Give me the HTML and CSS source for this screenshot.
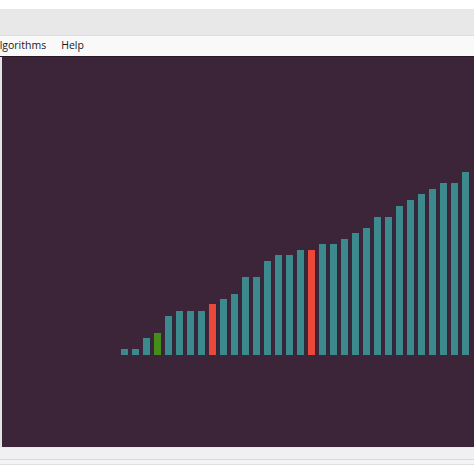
FILE: index.html
```html
<!DOCTYPE html>
<html>
<head>
<meta charset="utf-8">
<link rel="stylesheet" href="styles.css">
</head>
<body>
<div class="window">
  <div class="titlebar"></div>
  <div class="toolbar"></div>
  <div class="menubar">
    <span class="menu-item first">Algorithms</span>
    <span class="menu-item">Help</span>
  </div>
  <div class="main">
    <div class="strip"></div>
    <div class="canvas">
      <div class="bar" style="height:6px"></div>
      <div class="bar" style="height:6px"></div>
      <div class="bar" style="height:17px"></div>
      <div class="bar green" style="height:22px"></div>
      <div class="bar" style="height:39px"></div>
      <div class="bar" style="height:44px"></div>
      <div class="bar" style="height:44px"></div>
      <div class="bar" style="height:44px"></div>
      <div class="bar red" style="height:51px"></div>
      <div class="bar" style="height:56px"></div>
      <div class="bar" style="height:61px"></div>
      <div class="bar" style="height:78px"></div>
      <div class="bar" style="height:78px"></div>
      <div class="bar" style="height:94px"></div>
      <div class="bar" style="height:100px"></div>
      <div class="bar" style="height:100px"></div>
      <div class="bar" style="height:105px"></div>
      <div class="bar red" style="height:105px"></div>
      <div class="bar" style="height:111px"></div>
      <div class="bar" style="height:111px"></div>
      <div class="bar" style="height:116px"></div>
      <div class="bar" style="height:122px"></div>
      <div class="bar" style="height:127px"></div>
      <div class="bar" style="height:138px"></div>
      <div class="bar" style="height:138px"></div>
      <div class="bar" style="height:149px"></div>
      <div class="bar" style="height:155px"></div>
      <div class="bar" style="height:161px"></div>
      <div class="bar" style="height:166px"></div>
      <div class="bar" style="height:172px"></div>
      <div class="bar" style="height:172px"></div>
      <div class="bar" style="height:183px"></div>
    </div>
  </div>
  <div class="statusbar"></div>
  <div class="bottom-line"></div>
  <div class="footer"></div>
</div>
</body>
</html>
```
FILE: styles.css
```css
html, body {
  margin: 0;
  padding: 0;
  background: #ffffff;
}
.window {
  width: 474px;
  height: 474px;
  display: flex;
  flex-direction: column;
  overflow: hidden;
  font-family: "Open Sans", "Noto Sans", sans-serif;
}
.titlebar {
  height: 9px;
  background: #ffffff;
  flex: none;
}
.toolbar {
  height: 26px;
  background: #e8e8e8;
  border-bottom: 1px solid #dedede;
  flex: none;
}
.menubar {
  height: 21px;
  box-sizing: border-box;
  padding-bottom: 2px;
  background: #f9f9f9;
  border-bottom: 1px solid #2a1828;
  display: flex;
  align-items: center;
  gap: 15px;
  flex: none;
  overflow: hidden;
  font-size: 10.5px;
  color: #1a1a1a;
}
.menu-item.first {
  margin-left: -7px;
}
.main {
  height: 390px;
  display: flex;
  flex: none;
}
.strip {
  width: 2px;
  background: #e4e2e4;
  flex: none;
}
.canvas {
  flex: 1;
  background: #3d2539;
  display: flex;
  align-items: flex-end;
  gap: 4px;
  padding-left: 119px;
  padding-bottom: 92px;
  box-sizing: border-box;
  overflow: hidden;
}
.bar {
  width: 7px;
  flex: none;
  background: #3c8a8d;
  box-shadow: 1px 0 0 #2a2a3a;
}
.bar.red {
  background: #e9483a;
}
.bar.green {
  background: #438d18;
}
.statusbar {
  height: 11px;
  background: #f0f0f2;
  border-top: 1px solid #f2e6ec;
  border-bottom: 1px solid #d8d8da;
  flex: none;
}
.bottom-line {
  height: 4px;
  background: #f4f4f5;
  border-bottom: 1px solid #e0e0e2;
  flex: none;
}
.footer {
  flex: 1;
  background: #ffffff;
}
```
